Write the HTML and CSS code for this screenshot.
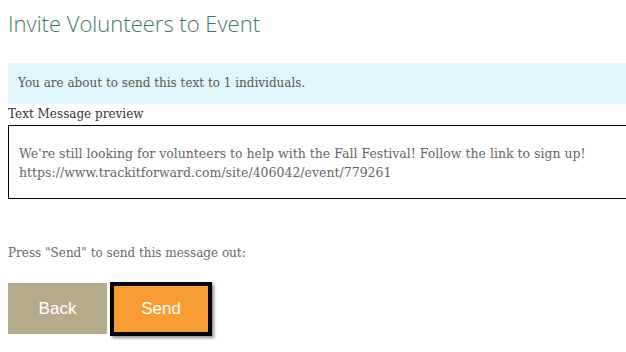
FILE: index.html
```html
<!DOCTYPE html>
<html lang="en">
<head>
    <meta charset="UTF-8">
    <meta name="viewport" content="width=device-width, initial-scale=1.0">
    <title>Invite Volunteers to Event</title>
    <link rel="stylesheet" href="styles.css">
</head>
<body>

    <h1 class="page-title">Invite Volunteers to Event</h1>

    <div class="notice">You are about to send this text to 1 individuals.</div>

    <div class="preview-label">Text Message preview</div>
    <div class="preview-box">
        We're still looking for volunteers to help with the Fall Festival! Follow the link to sign up!<br>
        https://www.trackitforward.com/site/406042/event/779261
    </div>

    <p class="hint">Press "Send" to send this message out:</p>

    <div class="actions">
        <button class="btn btn-back">Back</button>
        <button class="btn btn-send">Send</button>
    </div>

</body>
</html>
```

FILE: styles.css
```css
body {
    font-family: "DejaVu Serif", Georgia, serif;
    font-size: 12px;
    color: #555;
    background: white;
    margin: 0;
    padding: 8px;
    overflow: hidden;
}
.page-title {
    font-family: "Open Sans", sans-serif;
    font-weight: 300;
    font-size: 22px;
    line-height: 30px;
    color: #3f7a68;
    margin: 0 0 25px 0;
}
.notice {
    background-color: #dff7fb;
    color: #5a5550;
    padding: 0 10px;
    height: 41px;
    line-height: 41px;
    margin-right: -8px;
}
.preview-label {
    color: #333;
    line-height: 21px;
}
.preview-box {
    border: 1px solid #000;
    border-right: none;
    margin-right: -8px;
    padding: 18px 10px 12px 10px;
    height: 42px;
    font-size: 12.5px;
    line-height: 19px;
    color: #666;
}
.hint {
    color: #666;
    margin: 47px 0 23px 0;
}
.actions {
    display: flex;
    align-items: flex-start;
    gap: 3px;
}
.btn {
    font-family: "Liberation Sans", Arial, sans-serif;
    font-size: 17px;
    color: white;
    border: none;
    cursor: pointer;
}
.btn-back {
    width: 99px;
    height: 51px;
    background-color: #b5ab8c;
}
.btn-send {
    width: 102px;
    height: 54px;
    margin-top: -1px;
    background-color: #f89d33;
    border: 4px solid #000;
    box-shadow: 2px 2px 3px rgba(0,0,0,0.45);
}
```
